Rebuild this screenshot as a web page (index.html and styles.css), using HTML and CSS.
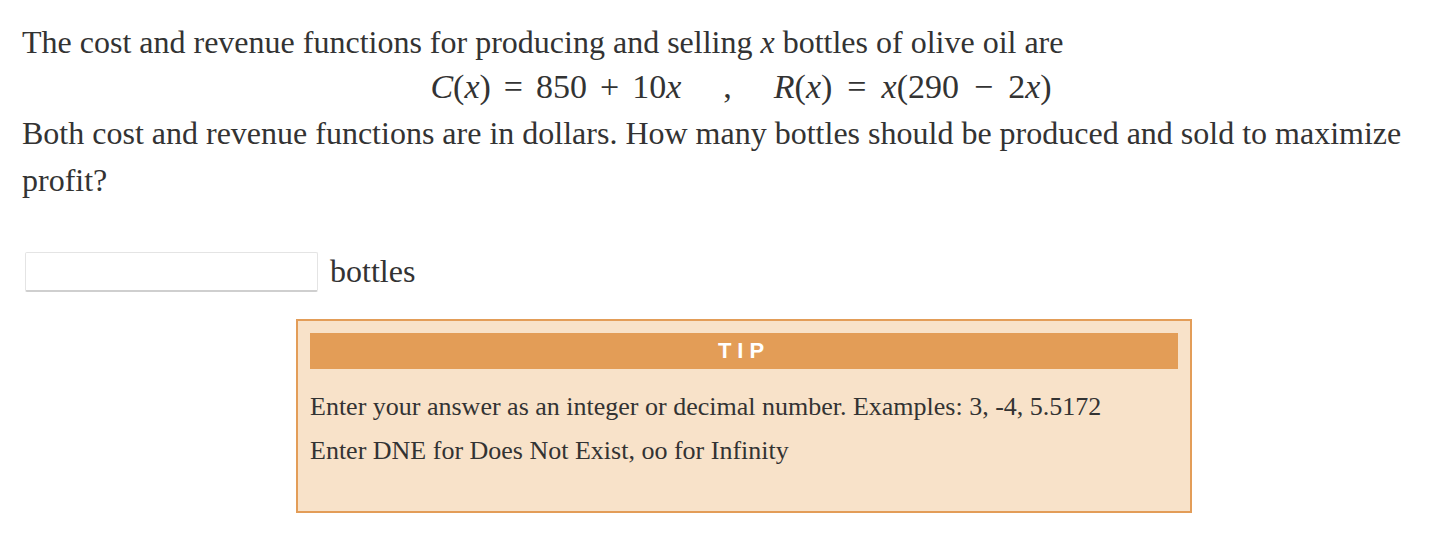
FILE: index.html
```html
<!DOCTYPE html>
<html>
<head>
<meta charset="utf-8">
<link rel="stylesheet" href="styles.css">
</head>
<body>
<div class="question">
  <p class="text">The cost and revenue functions for producing and selling <i class="mi">x</i> bottles of olive oil are</p>
  <div class="math">
    <span class="eq"><i class="mi">C</i>(<i class="mi">x</i>)<span class="op">=</span>850<span class="op">+</span>10<i class="mi">x</i></span>
    <span class="comma">,</span>
    <span class="eq eq-wide"><i class="mi">R</i>(<i class="mi">x</i>)<span class="op">=</span><i class="mi">x</i>(290<span class="op">&minus;</span>2<i class="mi">x</i>)</span>
  </div>
  <p class="text text-wrap">Both cost and revenue functions are in dollars. How many bottles should be produced and sold to maximize profit?</p>
  <div class="answer">
    <input class="answer-input" type="text">
    <span class="unit">bottles</span>
  </div>
  <div class="tip">
    <div class="tip-head">TIP</div>
    <p class="tip-line">Enter your answer as an integer or decimal number. Examples: 3, -4, 5.5172</p>
    <p class="tip-line">Enter DNE for Does Not Exist, oo for Infinity</p>
  </div>
</div>
</body>
</html>
```
FILE: styles.css
```css
html, body {
  margin: 0;
  padding: 0;
  background: #fff;
}
.question {
  padding: 20px 22px 0 22px;
  font-family: "Liberation Serif", "Times New Roman", serif;
  color: #333;
  font-size: 32px;
  line-height: 44px;
  width: 1400px;
}
.text {
  margin: 0;
}
.text-wrap {
  line-height: 47px;
}
.mi {
  font-style: italic;
}
.math {
  display: flex;
  justify-content: center;
  align-items: baseline;
  gap: 42px;
  line-height: 46px;
  padding-left: 38px;
  font-size: 34px;
}
.op {
  margin: 0 13px;
}
.eq-wide .op {
  margin: 0 15px;
}
.answer {
  display: flex;
  align-items: center;
  margin-top: 48px;
  margin-left: 3px;
  gap: 12px;
}
.answer-input {
  box-sizing: border-box;
  width: 293px;
  height: 40px;
  border: 1px solid #e4e4e4;
  border-bottom: 2px solid #cfcfcf;
  border-radius: 2px;
  background: #fff;
}
.unit {
  line-height: 40px;
  position: relative;
  top: -1px;
}
.tip {
  box-sizing: border-box;
  width: 896px;
  height: 194px;
  margin: 27px 0 0 274px;
  background: #f8e2c9;
  border: 2px solid #e39d58;
  padding: 12px;
}
.tip-head {
  background: #e39d57;
  color: #fff;
  font-family: "Liberation Sans", Arial, sans-serif;
  font-weight: bold;
  font-size: 22px;
  letter-spacing: 6px;
  text-align: center;
  line-height: 36px;
  height: 36px;
  margin-bottom: 16px;
}
.tip-line {
  margin: 0;
  font-size: 26px;
  line-height: 44px;
}
```
